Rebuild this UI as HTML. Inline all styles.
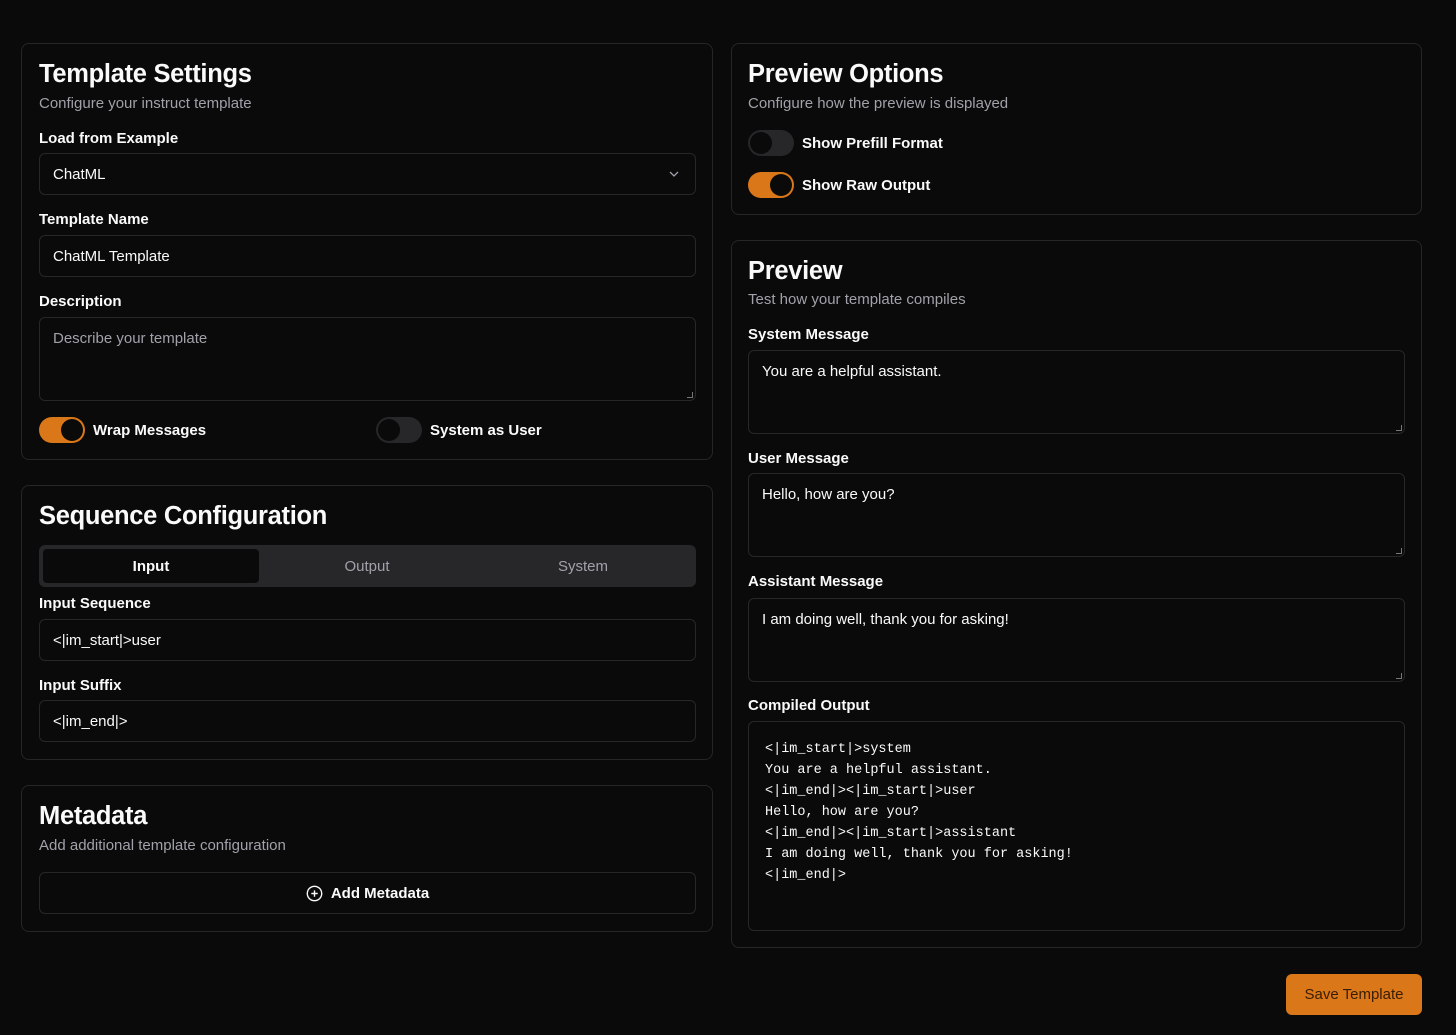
<!DOCTYPE html>
<html><head><meta charset="utf-8"><style>
*{box-sizing:border-box;margin:0;padding:0}
body{width:1456px;height:1035px;background:#0a0a0a;color:#fafafa;font-family:"Liberation Sans",sans-serif;position:relative;overflow:hidden}
.a{position:absolute}
.card{position:absolute;border:1px solid #262629;border-radius:8px;background:#0a0a0a}
.t{position:absolute;font-size:25.5px;font-weight:700;letter-spacing:-0.3px;color:#fafafa;margin-top:2px}
.s{position:absolute;font-size:15px;color:#a1a1aa;margin-top:1px}
.l{position:absolute;font-size:15px;font-weight:600;color:#fafafa;margin-top:1px}
.in{position:absolute;border:1px solid #27272a;border-radius:6px;font-size:15px;padding-left:13px;display:flex;align-items:center;color:#fafafa}
.ta{position:absolute;border:1px solid #27272a;border-radius:6px;font-size:15px;padding:12px 13px;color:#fafafa}
.tg{position:absolute;width:46px;height:26px;border-radius:13px}
.tg i{position:absolute;top:2px;width:22px;height:22px;border-radius:50%;background:#0a0a0a}
.on{background:#d97719}.on i{left:22px}
.off{background:#27272a}.off i{left:2px}
.tl{position:absolute;font-size:15px;font-weight:600;margin-top:1px}
.mono{font-family:"Liberation Mono",monospace;font-size:13.5px;line-height:21px;white-space:pre}
.grip{position:absolute;right:2px;bottom:2px;width:6px;height:6px;border-right:1px solid #777;border-bottom:1px solid #777}
</style></head><body>

<div class="card" style="left:21px;top:43px;width:692px;height:417px"></div>
<div class="t" style="left:39px;top:58px">Template Settings</div>
<div class="s" style="left:39px;top:94px">Configure your instruct template</div>
<div class="l" style="left:39px;top:129px">Load from Example</div>
<div class="in" style="left:39px;top:153px;width:657px;height:42px">ChatML</div>
<svg class="a" style="left:667px;top:167px" width="14" height="14" viewBox="0 0 14 14"><path d="M3 5l4 4 4-4" fill="none" stroke="#a1a1aa" stroke-width="1.3"/></svg>
<div class="l" style="left:39px;top:210px">Template Name</div>
<div class="in" style="left:39px;top:235px;width:657px;height:42px">ChatML Template</div>
<div class="l" style="left:39px;top:292px">Description</div>
<div class="ta" style="left:39px;top:317px;width:657px;height:84px;color:#a1a1aa">Describe your template<div class="grip"></div></div>
<div class="tg on" style="left:39px;top:417px"><i></i></div>
<div class="tl" style="left:93px;top:421px">Wrap Messages</div>
<div class="tg off" style="left:376px;top:417px"><i></i></div>
<div class="tl" style="left:430px;top:421px">System as User</div>

<div class="card" style="left:21px;top:485px;width:692px;height:275px"></div>
<div class="t" style="left:39px;top:500px">Sequence Configuration</div>
<div class="a" style="left:39px;top:545px;width:657px;height:42px;background:#27272a;border-radius:6px"></div>
<div class="a" style="left:43px;top:549px;width:216px;height:34px;background:#0a0a0a;border-radius:4px;font-size:15px;font-weight:600;display:flex;align-items:center;justify-content:center">Input</div>
<div class="a" style="left:259px;top:549px;width:216px;height:34px;color:#a1a1aa;font-size:15px;display:flex;align-items:center;justify-content:center">Output</div>
<div class="a" style="left:475px;top:549px;width:216px;height:34px;color:#a1a1aa;font-size:15px;display:flex;align-items:center;justify-content:center">System</div>
<div class="l" style="left:39px;top:594px">Input Sequence</div>
<div class="in" style="left:39px;top:619px;width:657px;height:42px">&lt;|im_start|&gt;user</div>
<div class="l" style="left:39px;top:676px">Input Suffix</div>
<div class="in" style="left:39px;top:700px;width:657px;height:42px">&lt;|im_end|&gt;</div>

<div class="card" style="left:21px;top:785px;width:692px;height:147px"></div>
<div class="t" style="left:39px;top:800px">Metadata</div>
<div class="s" style="left:39px;top:836px">Add additional template configuration</div>
<div class="in" style="left:39px;top:872px;width:657px;height:42px;justify-content:center;padding:0;font-weight:600">
<svg width="17" height="17" viewBox="0 0 16 16" style="margin-right:8px"><circle cx="8" cy="8" r="6.8" fill="none" stroke="#fafafa" stroke-width="1.3"/><path d="M8 5v6M5 8h6" stroke="#fafafa" stroke-width="1.3"/></svg>Add Metadata</div>

<div class="card" style="left:731px;top:43px;width:691px;height:172px"></div>
<div class="t" style="left:748px;top:58px">Preview Options</div>
<div class="s" style="left:748px;top:94px">Configure how the preview is displayed</div>
<div class="tg off" style="left:748px;top:130px"><i></i></div>
<div class="tl" style="left:802px;top:134px">Show Prefill Format</div>
<div class="tg on" style="left:748px;top:172px"><i></i></div>
<div class="tl" style="left:802px;top:176px">Show Raw Output</div>

<div class="card" style="left:731px;top:240px;width:691px;height:708px"></div>
<div class="t" style="left:748px;top:255px">Preview</div>
<div class="s" style="left:748px;top:290px">Test how your template compiles</div>
<div class="l" style="left:748px;top:325px">System Message</div>
<div class="ta" style="left:748px;top:350px;width:657px;height:84px">You are a helpful assistant.<div class="grip"></div></div>
<div class="l" style="left:748px;top:449px">User Message</div>
<div class="ta" style="left:748px;top:473px;width:657px;height:84px">Hello, how are you?<div class="grip"></div></div>
<div class="l" style="left:748px;top:572px">Assistant Message</div>
<div class="ta" style="left:748px;top:598px;width:657px;height:84px">I am doing well, thank you for asking!<div class="grip"></div></div>
<div class="l" style="left:748px;top:696px">Compiled Output</div>
<div class="ta mono" style="left:748px;top:721px;width:657px;height:210px;padding:17px 16px">&lt;|im_start|&gt;system
You are a helpful assistant.
&lt;|im_end|&gt;&lt;|im_start|&gt;user
Hello, how are you?
&lt;|im_end|&gt;&lt;|im_start|&gt;assistant
I am doing well, thank you for asking!
&lt;|im_end|&gt;</div>

<div class="a" style="left:1286px;top:974px;width:136px;height:41px;background:#d97719;border-radius:6px;color:#3a1d05;font-size:15px;display:flex;align-items:center;justify-content:center">Save Template</div>
</body></html>
